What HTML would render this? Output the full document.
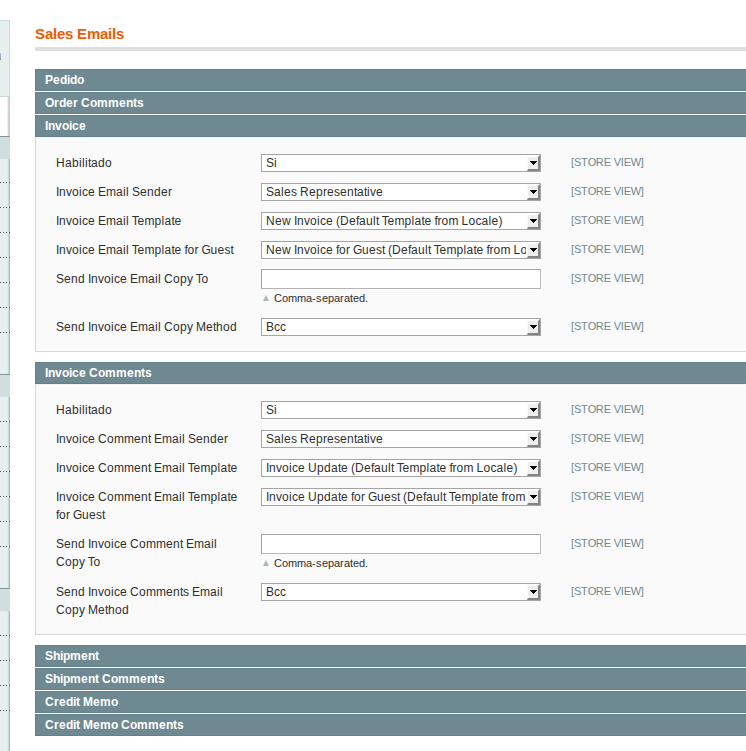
<!DOCTYPE html>
<html><head><meta charset="utf-8"><title>Sales Emails</title>
<style>
html,body{margin:0;padding:0;}
body{width:746px;height:751px;overflow:hidden;position:relative;background:#fff;font-family:"Liberation Sans",sans-serif;color:#2f2f2f;}
.a{position:absolute;}
i{display:inline-block;font-style:normal;}
.w0{width:0px}.w1{width:1px}.w2{width:2px}.w3{width:3px}.w4{width:4px}.w5{width:5px}.w6{width:6px}.w7{width:7px}.w8{width:8px}.w9{width:9px}.w10{width:10px}.w11{width:11px}.w12{width:12px}.w13{width:13px}.w14{width:14px}.w15{width:15px}.w16{width:16px}
.t12{position:absolute;font-size:12px;line-height:14px;white-space:nowrap;color:#2f2f2f;}
.t11{position:absolute;font-size:11px;line-height:13px;white-space:nowrap;}
.scope{color:#6f8992;}
.nav-light{position:absolute;left:0;width:10px;background:linear-gradient(to right,#e6eeee 0,#e6eeee 7px,#e2ebeb 7px,#e2ebeb 8px,#cbdada 8px,#cbdada 9px,#a6bbbb 9px,#a6bbbb 10px);}
.nav-white{position:absolute;left:0;width:10px;background:linear-gradient(to right,#fff 0,#fff 7px,#eeeeee 7px,#eeeeee 8px,#d8d8d8 8px,#d8d8d8 9px,#c6c6c6 9px,#c6c6c6 10px);}
.nav-dark{position:absolute;left:0;width:10px;height:1px;background:#7f969b;}
.nav-head{position:absolute;left:0;width:10px;height:22px;background:#d1dede;}
.dots{position:absolute;left:0;width:10px;height:1px;background:repeating-linear-gradient(to right,#4d4d4d 0,#4d4d4d 1px,#e6eeee 1px,#e6eeee 2px,#fff 2px,#fff 3px);}
.head{position:absolute;left:35px;width:730px;height:20px;background:#6f8992;border:1px solid #64808a;border-right:0;}
.head span{position:absolute;left:9px;font-size:12px;line-height:14px;font-weight:bold;color:#fff;white-space:nowrap;}
.fs{position:absolute;left:35px;width:720px;background:#fafafa;border:1px solid #d6d6d6;border-top-color:#f2f2f2;border-right:0;}
.sel{position:absolute;left:261px;width:278px;height:16px;border:1px solid #a5a5a5;background:#fff;overflow:hidden;}
.sel .v{position:absolute;left:4px;width:260px;overflow:hidden;font-size:12px;line-height:14px;white-space:nowrap;color:#2f2f2f;}
.sel .btn{position:absolute;left:265px;top:0;width:10px;height:12px;background:#efeeed;border-top:2px solid #fff;border-left:1px solid #fbfbfb;border-right:2px solid #848484;border-bottom:2px solid #848484;}
.sel .tri{position:absolute;left:2px;top:4px;width:7px;height:4px;background:linear-gradient(#000,#000) 0 0/7px 1px no-repeat,linear-gradient(#000,#000) 1px 1px/5px 1px no-repeat,linear-gradient(#000,#000) 2px 2px/3px 1px no-repeat,linear-gradient(#000,#000) 3px 3px/1px 1px no-repeat;}
.inp{position:absolute;left:261px;width:278px;height:18px;border:1px solid;border-color:#a6a6a6 #bfbfbf #b5b5b5 #a3a3a3;background:#fff;}
.ntri{position:absolute;left:263px;width:0;height:0;border-left:3.5px solid transparent;border-right:3.5px solid transparent;border-bottom:6px solid #a9bbc1;}
</style></head><body>

<div class="a" style="left:0;top:20px;width:9px;height:75px;background:#e6eeee;border:1px solid #cbdada;border-left:0;"></div>
<div class="a" style="left:0;top:53px;width:1px;height:7px;background:linear-gradient(#b3c7e2,#7898c4);"></div>
<div class="nav-white" style="top:97px;height:39px;"></div>
<div class="nav-dark" style="top:136px"></div>
<div class="nav-head" style="top:137px"></div>
<div class="nav-light" style="top:159px;height:215px"></div>
<div class="dots" style="top:182px"></div>
<div class="dots" style="top:207px"></div>
<div class="dots" style="top:232px"></div>
<div class="dots" style="top:257px"></div>
<div class="dots" style="top:282px"></div>
<div class="dots" style="top:307px"></div>
<div class="dots" style="top:332px"></div>
<div class="nav-dark" style="top:374px"></div>
<div class="nav-head" style="top:375px"></div>
<div class="nav-light" style="top:397px;height:191px"></div>
<div class="dots" style="top:421px"></div>
<div class="dots" style="top:446px"></div>
<div class="dots" style="top:471px"></div>
<div class="dots" style="top:496px"></div>
<div class="dots" style="top:521px"></div>
<div class="dots" style="top:546px"></div>
<div class="nav-dark" style="top:588px"></div>
<div class="nav-head" style="top:589px"></div>
<div class="nav-light" style="top:611px;height:140px"></div>
<div class="dots" style="top:635px"></div>
<div class="dots" style="top:660px"></div>
<div class="dots" style="top:685px"></div>
<div class="dots" style="top:710px"></div>
<div class="a" style="left:35px;top:26px;font-size:15px;line-height:16px;font-weight:bold;color:#eb5e00;white-space:nowrap;"><i class="w10">S</i><i class="w8">a</i><i class="w4">l</i><i class="w8">e</i><i class="w8">s</i><i class="w4">&nbsp;</i><i class="w10">E</i><i class="w13">m</i><i class="w8">a</i><i class="w4">i</i><i class="w4">l</i><i class="w8">s</i></div>
<div class="a" style="left:35px;top:47px;width:711px;height:4px;background:#dfdfdf;"></div>
<div class="head" style="top:69px"><span style="top:3px"><i class="w8">P</i><i class="w7">e</i><i class="w7">d</i><i class="w3">i</i><i class="w7">d</i><i class="w7">o</i></span></div>
<div class="head" style="top:92px"><span style="top:3px"><i class="w9">O</i><i class="w5">r</i><i class="w7">d</i><i class="w7">e</i><i class="w5">r</i><i class="w3">&nbsp;</i><i class="w9">C</i><i class="w7">o</i><i class="w11">m</i><i class="w11">m</i><i class="w7">e</i><i class="w7">n</i><i class="w4">t</i><i class="w7">s</i></span></div>
<div class="head" style="top:115px"><span style="top:3px"><i class="w3">I</i><i class="w7">n</i><i class="w7">v</i><i class="w7">o</i><i class="w3">i</i><i class="w7">c</i><i class="w7">e</i></span></div>
<div class="fs" style="top:137px;height:213px"></div>
<div class="t12" style="left:56px;top:156px"><i class="w9">H</i><i class="w7">a</i><i class="w7">b</i><i class="w3">i</i><i class="w3">l</i><i class="w3">i</i><i class="w3">t</i><i class="w7">a</i><i class="w7">d</i><i class="w7">o</i></div>
<div class="t11 scope" style="left:571px;top:156px"><i class="w3">[</i><i class="w7">S</i><i style="width:6.80px">T</i><i class="w8">O</i><i class="w8">R</i><i class="w7">E</i><i class="w3">&nbsp;</i><i class="w7">V</i><i class="w3">I</i><i class="w7">E</i><i class="w10">W</i><i class="w3">]</i></div>
<div class="sel" style="top:154px"><div class="v" style="top:1px"><i class="w8">S</i><i class="w3">i</i></div><div class="btn"><div class="tri"></div></div></div>
<div class="t12" style="left:56px;top:185px"><i class="w3">I</i><i class="w7">n</i><i class="w6">v</i><i class="w7">o</i><i class="w3">i</i><i class="w6">c</i><i class="w7">e</i><i class="w3">&nbsp;</i><i class="w8">E</i><i class="w10">m</i><i class="w7">a</i><i class="w3">i</i><i class="w3">l</i><i class="w3">&nbsp;</i><i class="w8">S</i><i class="w7">e</i><i class="w7">n</i><i class="w7">d</i><i class="w7">e</i><i class="w4">r</i></div>
<div class="t11 scope" style="left:571px;top:185px"><i class="w3">[</i><i class="w7">S</i><i style="width:6.80px">T</i><i class="w8">O</i><i class="w8">R</i><i class="w7">E</i><i class="w3">&nbsp;</i><i class="w7">V</i><i class="w3">I</i><i class="w7">E</i><i class="w10">W</i><i class="w3">]</i></div>
<div class="sel" style="top:183px"><div class="v" style="top:1px"><i class="w8">S</i><i class="w7">a</i><i class="w3">l</i><i class="w7">e</i><i class="w6">s</i><i class="w3">&nbsp;</i><i class="w9">R</i><i class="w7">e</i><i class="w7">p</i><i class="w4">r</i><i class="w7">e</i><i class="w6">s</i><i class="w7">e</i><i class="w7">n</i><i class="w3">t</i><i class="w7">a</i><i class="w3">t</i><i class="w3">i</i><i class="w6">v</i><i class="w7">e</i></div><div class="btn"><div class="tri"></div></div></div>
<div class="t12" style="left:56px;top:214px"><i class="w3">I</i><i class="w7">n</i><i class="w6">v</i><i class="w7">o</i><i class="w3">i</i><i class="w6">c</i><i class="w7">e</i><i class="w3">&nbsp;</i><i class="w8">E</i><i class="w10">m</i><i class="w7">a</i><i class="w3">i</i><i class="w3">l</i><i style="width:2.78px">&nbsp;</i><i style="width:5.67px">T</i><i class="w7">e</i><i class="w10">m</i><i class="w7">p</i><i class="w3">l</i><i class="w7">a</i><i class="w3">t</i><i class="w7">e</i></div>
<div class="t11 scope" style="left:571px;top:214px"><i class="w3">[</i><i class="w7">S</i><i style="width:6.80px">T</i><i class="w8">O</i><i class="w8">R</i><i class="w7">E</i><i class="w3">&nbsp;</i><i class="w7">V</i><i class="w3">I</i><i class="w7">E</i><i class="w10">W</i><i class="w3">]</i></div>
<div class="sel" style="top:212px"><div class="v" style="top:1px"><i class="w9">N</i><i class="w7">e</i><i class="w9">w</i><i class="w3">&nbsp;</i><i class="w3">I</i><i class="w7">n</i><i class="w6">v</i><i class="w7">o</i><i class="w3">i</i><i class="w6">c</i><i class="w7">e</i><i class="w3">&nbsp;</i><i class="w4">(</i><i class="w9">D</i><i class="w7">e</i><i class="w3">f</i><i class="w7">a</i><i class="w7">u</i><i class="w3">l</i><i class="w3">t</i><i style="width:2.78px">&nbsp;</i><i style="width:5.67px">T</i><i class="w7">e</i><i class="w10">m</i><i class="w7">p</i><i class="w3">l</i><i class="w7">a</i><i class="w3">t</i><i class="w7">e</i><i class="w3">&nbsp;</i><i class="w3">f</i><i class="w4">r</i><i class="w7">o</i><i class="w10">m</i><i class="w3">&nbsp;</i><i class="w7">L</i><i class="w7">o</i><i class="w6">c</i><i class="w7">a</i><i class="w3">l</i><i class="w7">e</i><i class="w4">)</i></div><div class="btn"><div class="tri"></div></div></div>
<div class="t12" style="left:56px;top:243px"><i class="w3">I</i><i class="w7">n</i><i class="w6">v</i><i class="w7">o</i><i class="w3">i</i><i class="w6">c</i><i class="w7">e</i><i class="w3">&nbsp;</i><i class="w8">E</i><i class="w10">m</i><i class="w7">a</i><i class="w3">i</i><i class="w3">l</i><i style="width:2.78px">&nbsp;</i><i style="width:5.67px">T</i><i class="w7">e</i><i class="w10">m</i><i class="w7">p</i><i class="w3">l</i><i class="w7">a</i><i class="w3">t</i><i class="w7">e</i><i class="w3">&nbsp;</i><i class="w3">f</i><i class="w7">o</i><i class="w4">r</i><i class="w3">&nbsp;</i><i class="w9">G</i><i class="w7">u</i><i class="w7">e</i><i class="w6">s</i><i class="w3">t</i></div>
<div class="t11 scope" style="left:571px;top:243px"><i class="w3">[</i><i class="w7">S</i><i style="width:6.80px">T</i><i class="w8">O</i><i class="w8">R</i><i class="w7">E</i><i class="w3">&nbsp;</i><i class="w7">V</i><i class="w3">I</i><i class="w7">E</i><i class="w10">W</i><i class="w3">]</i></div>
<div class="sel" style="top:241px"><div class="v" style="top:1px"><i class="w9">N</i><i class="w7">e</i><i class="w9">w</i><i class="w3">&nbsp;</i><i class="w3">I</i><i class="w7">n</i><i class="w6">v</i><i class="w7">o</i><i class="w3">i</i><i class="w6">c</i><i class="w7">e</i><i class="w3">&nbsp;</i><i class="w3">f</i><i class="w7">o</i><i class="w4">r</i><i class="w3">&nbsp;</i><i class="w9">G</i><i class="w7">u</i><i class="w7">e</i><i class="w6">s</i><i class="w3">t</i><i class="w3">&nbsp;</i><i class="w4">(</i><i class="w9">D</i><i class="w7">e</i><i class="w3">f</i><i class="w7">a</i><i class="w7">u</i><i class="w3">l</i><i class="w3">t</i><i style="width:2.78px">&nbsp;</i><i style="width:5.67px">T</i><i class="w7">e</i><i class="w10">m</i><i class="w7">p</i><i class="w3">l</i><i class="w7">a</i><i class="w3">t</i><i class="w7">e</i><i class="w3">&nbsp;</i><i class="w3">f</i><i class="w4">r</i><i class="w7">o</i><i class="w10">m</i><i class="w3">&nbsp;</i><i class="w7">L</i><i class="w7">o</i><i class="w6">c</i><i class="w7">a</i><i class="w3">l</i><i class="w7">e</i><i class="w4">)</i></div><div class="btn"><div class="tri"></div></div></div>
<div class="t12" style="left:56px;top:272px"><i class="w8">S</i><i class="w7">e</i><i class="w7">n</i><i class="w7">d</i><i class="w3">&nbsp;</i><i class="w3">I</i><i class="w7">n</i><i class="w6">v</i><i class="w7">o</i><i class="w3">i</i><i class="w6">c</i><i class="w7">e</i><i class="w3">&nbsp;</i><i class="w8">E</i><i class="w10">m</i><i class="w7">a</i><i class="w3">i</i><i class="w3">l</i><i class="w3">&nbsp;</i><i class="w9">C</i><i class="w7">o</i><i class="w7">p</i><i class="w6">y</i><i style="width:2.78px">&nbsp;</i><i style="width:5.67px">T</i><i class="w7">o</i></div>
<div class="t11 scope" style="left:571px;top:272px"><i class="w3">[</i><i class="w7">S</i><i style="width:6.80px">T</i><i class="w8">O</i><i class="w8">R</i><i class="w7">E</i><i class="w3">&nbsp;</i><i class="w7">V</i><i class="w3">I</i><i class="w7">E</i><i class="w10">W</i><i class="w3">]</i></div>
<div class="inp" style="top:269px"></div>
<div class="ntri" style="top:295px"></div>
<div class="t11" style="left:274px;top:292px"><i class="w8">C</i><i class="w6">o</i><i class="w9">m</i><i class="w9">m</i><i class="w6">a</i><i class="w4">-</i><i class="w6">s</i><i class="w6">e</i><i class="w6">p</i><i class="w6">a</i><i class="w4">r</i><i class="w6">a</i><i class="w3">t</i><i class="w6">e</i><i class="w6">d</i><i class="w3">.</i></div>
<div class="t12" style="left:56px;top:320px"><i class="w8">S</i><i class="w7">e</i><i class="w7">n</i><i class="w7">d</i><i class="w3">&nbsp;</i><i class="w3">I</i><i class="w7">n</i><i class="w6">v</i><i class="w7">o</i><i class="w3">i</i><i class="w6">c</i><i class="w7">e</i><i class="w3">&nbsp;</i><i class="w8">E</i><i class="w10">m</i><i class="w7">a</i><i class="w3">i</i><i class="w3">l</i><i class="w3">&nbsp;</i><i class="w9">C</i><i class="w7">o</i><i class="w7">p</i><i class="w6">y</i><i class="w3">&nbsp;</i><i class="w10">M</i><i class="w7">e</i><i class="w3">t</i><i class="w7">h</i><i class="w7">o</i><i class="w7">d</i></div>
<div class="t11 scope" style="left:571px;top:320px"><i class="w3">[</i><i class="w7">S</i><i style="width:6.80px">T</i><i class="w8">O</i><i class="w8">R</i><i class="w7">E</i><i class="w3">&nbsp;</i><i class="w7">V</i><i class="w3">I</i><i class="w7">E</i><i class="w10">W</i><i class="w3">]</i></div>
<div class="sel" style="top:318px"><div class="v" style="top:1px"><i class="w8">B</i><i class="w6">c</i><i class="w6">c</i></div><div class="btn"><div class="tri"></div></div></div>
<div class="head" style="top:362px"><span style="top:3px"><i class="w3">I</i><i class="w7">n</i><i class="w7">v</i><i class="w7">o</i><i class="w3">i</i><i class="w7">c</i><i class="w7">e</i><i class="w3">&nbsp;</i><i class="w9">C</i><i class="w7">o</i><i class="w11">m</i><i class="w11">m</i><i class="w7">e</i><i class="w7">n</i><i class="w4">t</i><i class="w7">s</i></span></div>
<div class="fs" style="top:384px;height:249px"></div>
<div class="t12" style="left:56px;top:403px"><i class="w9">H</i><i class="w7">a</i><i class="w7">b</i><i class="w3">i</i><i class="w3">l</i><i class="w3">i</i><i class="w3">t</i><i class="w7">a</i><i class="w7">d</i><i class="w7">o</i></div>
<div class="t11 scope" style="left:571px;top:403px"><i class="w3">[</i><i class="w7">S</i><i style="width:6.80px">T</i><i class="w8">O</i><i class="w8">R</i><i class="w7">E</i><i class="w3">&nbsp;</i><i class="w7">V</i><i class="w3">I</i><i class="w7">E</i><i class="w10">W</i><i class="w3">]</i></div>
<div class="sel" style="top:401px"><div class="v" style="top:1px"><i class="w8">S</i><i class="w3">i</i></div><div class="btn"><div class="tri"></div></div></div>
<div class="t12" style="left:56px;top:432px"><i class="w3">I</i><i class="w7">n</i><i class="w6">v</i><i class="w7">o</i><i class="w3">i</i><i class="w6">c</i><i class="w7">e</i><i class="w3">&nbsp;</i><i class="w9">C</i><i class="w7">o</i><i class="w10">m</i><i class="w10">m</i><i class="w7">e</i><i class="w7">n</i><i class="w3">t</i><i class="w3">&nbsp;</i><i class="w8">E</i><i class="w10">m</i><i class="w7">a</i><i class="w3">i</i><i class="w3">l</i><i class="w3">&nbsp;</i><i class="w8">S</i><i class="w7">e</i><i class="w7">n</i><i class="w7">d</i><i class="w7">e</i><i class="w4">r</i></div>
<div class="t11 scope" style="left:571px;top:432px"><i class="w3">[</i><i class="w7">S</i><i style="width:6.80px">T</i><i class="w8">O</i><i class="w8">R</i><i class="w7">E</i><i class="w3">&nbsp;</i><i class="w7">V</i><i class="w3">I</i><i class="w7">E</i><i class="w10">W</i><i class="w3">]</i></div>
<div class="sel" style="top:430px"><div class="v" style="top:1px"><i class="w8">S</i><i class="w7">a</i><i class="w3">l</i><i class="w7">e</i><i class="w6">s</i><i class="w3">&nbsp;</i><i class="w9">R</i><i class="w7">e</i><i class="w7">p</i><i class="w4">r</i><i class="w7">e</i><i class="w6">s</i><i class="w7">e</i><i class="w7">n</i><i class="w3">t</i><i class="w7">a</i><i class="w3">t</i><i class="w3">i</i><i class="w6">v</i><i class="w7">e</i></div><div class="btn"><div class="tri"></div></div></div>
<div class="t12" style="left:56px;top:461px"><i class="w3">I</i><i class="w7">n</i><i class="w6">v</i><i class="w7">o</i><i class="w3">i</i><i class="w6">c</i><i class="w7">e</i><i class="w3">&nbsp;</i><i class="w9">C</i><i class="w7">o</i><i class="w10">m</i><i class="w10">m</i><i class="w7">e</i><i class="w7">n</i><i class="w3">t</i><i class="w3">&nbsp;</i><i class="w8">E</i><i class="w10">m</i><i class="w7">a</i><i class="w3">i</i><i class="w3">l</i><i style="width:2.78px">&nbsp;</i><i style="width:5.67px">T</i><i class="w7">e</i><i class="w10">m</i><i class="w7">p</i><i class="w3">l</i><i class="w7">a</i><i class="w3">t</i><i class="w7">e</i></div>
<div class="t11 scope" style="left:571px;top:461px"><i class="w3">[</i><i class="w7">S</i><i style="width:6.80px">T</i><i class="w8">O</i><i class="w8">R</i><i class="w7">E</i><i class="w3">&nbsp;</i><i class="w7">V</i><i class="w3">I</i><i class="w7">E</i><i class="w10">W</i><i class="w3">]</i></div>
<div class="sel" style="top:459px"><div class="v" style="top:1px"><i class="w3">I</i><i class="w7">n</i><i class="w6">v</i><i class="w7">o</i><i class="w3">i</i><i class="w6">c</i><i class="w7">e</i><i class="w3">&nbsp;</i><i class="w9">U</i><i class="w7">p</i><i class="w7">d</i><i class="w7">a</i><i class="w3">t</i><i class="w7">e</i><i class="w3">&nbsp;</i><i class="w4">(</i><i class="w9">D</i><i class="w7">e</i><i class="w3">f</i><i class="w7">a</i><i class="w7">u</i><i class="w3">l</i><i class="w3">t</i><i style="width:2.78px">&nbsp;</i><i style="width:5.67px">T</i><i class="w7">e</i><i class="w10">m</i><i class="w7">p</i><i class="w3">l</i><i class="w7">a</i><i class="w3">t</i><i class="w7">e</i><i class="w3">&nbsp;</i><i class="w3">f</i><i class="w4">r</i><i class="w7">o</i><i class="w10">m</i><i class="w3">&nbsp;</i><i class="w7">L</i><i class="w7">o</i><i class="w6">c</i><i class="w7">a</i><i class="w3">l</i><i class="w7">e</i><i class="w4">)</i></div><div class="btn"><div class="tri"></div></div></div>
<div class="t12" style="left:56px;top:490px"><i class="w3">I</i><i class="w7">n</i><i class="w6">v</i><i class="w7">o</i><i class="w3">i</i><i class="w6">c</i><i class="w7">e</i><i class="w3">&nbsp;</i><i class="w9">C</i><i class="w7">o</i><i class="w10">m</i><i class="w10">m</i><i class="w7">e</i><i class="w7">n</i><i class="w3">t</i><i class="w3">&nbsp;</i><i class="w8">E</i><i class="w10">m</i><i class="w7">a</i><i class="w3">i</i><i class="w3">l</i><i style="width:2.78px">&nbsp;</i><i style="width:5.67px">T</i><i class="w7">e</i><i class="w10">m</i><i class="w7">p</i><i class="w3">l</i><i class="w7">a</i><i class="w3">t</i><i class="w7">e</i></div>
<div class="t12" style="left:56px;top:508px"><i class="w3">f</i><i class="w7">o</i><i class="w4">r</i><i class="w3">&nbsp;</i><i class="w9">G</i><i class="w7">u</i><i class="w7">e</i><i class="w6">s</i><i class="w3">t</i></div>
<div class="t11 scope" style="left:571px;top:490px"><i class="w3">[</i><i class="w7">S</i><i style="width:6.80px">T</i><i class="w8">O</i><i class="w8">R</i><i class="w7">E</i><i class="w3">&nbsp;</i><i class="w7">V</i><i class="w3">I</i><i class="w7">E</i><i class="w10">W</i><i class="w3">]</i></div>
<div class="sel" style="top:488px"><div class="v" style="top:1px"><i class="w3">I</i><i class="w7">n</i><i class="w6">v</i><i class="w7">o</i><i class="w3">i</i><i class="w6">c</i><i class="w7">e</i><i class="w3">&nbsp;</i><i class="w9">U</i><i class="w7">p</i><i class="w7">d</i><i class="w7">a</i><i class="w3">t</i><i class="w7">e</i><i class="w3">&nbsp;</i><i class="w3">f</i><i class="w7">o</i><i class="w4">r</i><i class="w3">&nbsp;</i><i class="w9">G</i><i class="w7">u</i><i class="w7">e</i><i class="w6">s</i><i class="w3">t</i><i class="w3">&nbsp;</i><i class="w4">(</i><i class="w9">D</i><i class="w7">e</i><i class="w3">f</i><i class="w7">a</i><i class="w7">u</i><i class="w3">l</i><i class="w3">t</i><i style="width:2.78px">&nbsp;</i><i style="width:5.67px">T</i><i class="w7">e</i><i class="w10">m</i><i class="w7">p</i><i class="w3">l</i><i class="w7">a</i><i class="w3">t</i><i class="w7">e</i><i class="w3">&nbsp;</i><i class="w3">f</i><i class="w4">r</i><i class="w7">o</i><i class="w10">m</i><i class="w3">&nbsp;</i><i class="w7">L</i><i class="w7">o</i><i class="w6">c</i><i class="w7">a</i><i class="w3">l</i><i class="w7">e</i><i class="w4">)</i></div><div class="btn"><div class="tri"></div></div></div>
<div class="t12" style="left:56px;top:537px"><i class="w8">S</i><i class="w7">e</i><i class="w7">n</i><i class="w7">d</i><i class="w3">&nbsp;</i><i class="w3">I</i><i class="w7">n</i><i class="w6">v</i><i class="w7">o</i><i class="w3">i</i><i class="w6">c</i><i class="w7">e</i><i class="w3">&nbsp;</i><i class="w9">C</i><i class="w7">o</i><i class="w10">m</i><i class="w10">m</i><i class="w7">e</i><i class="w7">n</i><i class="w3">t</i><i class="w3">&nbsp;</i><i class="w8">E</i><i class="w10">m</i><i class="w7">a</i><i class="w3">i</i><i class="w3">l</i></div>
<div class="t12" style="left:56px;top:555px"><i class="w9">C</i><i class="w7">o</i><i class="w7">p</i><i class="w6">y</i><i style="width:2.78px">&nbsp;</i><i style="width:5.67px">T</i><i class="w7">o</i></div>
<div class="t11 scope" style="left:571px;top:537px"><i class="w3">[</i><i class="w7">S</i><i style="width:6.80px">T</i><i class="w8">O</i><i class="w8">R</i><i class="w7">E</i><i class="w3">&nbsp;</i><i class="w7">V</i><i class="w3">I</i><i class="w7">E</i><i class="w10">W</i><i class="w3">]</i></div>
<div class="inp" style="top:534px"></div>
<div class="ntri" style="top:560px"></div>
<div class="t11" style="left:274px;top:557px"><i class="w8">C</i><i class="w6">o</i><i class="w9">m</i><i class="w9">m</i><i class="w6">a</i><i class="w4">-</i><i class="w6">s</i><i class="w6">e</i><i class="w6">p</i><i class="w6">a</i><i class="w4">r</i><i class="w6">a</i><i class="w3">t</i><i class="w6">e</i><i class="w6">d</i><i class="w3">.</i></div>
<div class="t12" style="left:56px;top:585px"><i class="w8">S</i><i class="w7">e</i><i class="w7">n</i><i class="w7">d</i><i class="w3">&nbsp;</i><i class="w3">I</i><i class="w7">n</i><i class="w6">v</i><i class="w7">o</i><i class="w3">i</i><i class="w6">c</i><i class="w7">e</i><i class="w3">&nbsp;</i><i class="w9">C</i><i class="w7">o</i><i class="w10">m</i><i class="w10">m</i><i class="w7">e</i><i class="w7">n</i><i class="w3">t</i><i class="w6">s</i><i class="w3">&nbsp;</i><i class="w8">E</i><i class="w10">m</i><i class="w7">a</i><i class="w3">i</i><i class="w3">l</i></div>
<div class="t12" style="left:56px;top:603px"><i class="w9">C</i><i class="w7">o</i><i class="w7">p</i><i class="w6">y</i><i class="w3">&nbsp;</i><i class="w10">M</i><i class="w7">e</i><i class="w3">t</i><i class="w7">h</i><i class="w7">o</i><i class="w7">d</i></div>
<div class="t11 scope" style="left:571px;top:585px"><i class="w3">[</i><i class="w7">S</i><i style="width:6.80px">T</i><i class="w8">O</i><i class="w8">R</i><i class="w7">E</i><i class="w3">&nbsp;</i><i class="w7">V</i><i class="w3">I</i><i class="w7">E</i><i class="w10">W</i><i class="w3">]</i></div>
<div class="sel" style="top:583px"><div class="v" style="top:1px"><i class="w8">B</i><i class="w6">c</i><i class="w6">c</i></div><div class="btn"><div class="tri"></div></div></div>
<div class="head" style="top:645px"><span style="top:3px"><i class="w8">S</i><i class="w7">h</i><i class="w3">i</i><i class="w7">p</i><i class="w11">m</i><i class="w7">e</i><i class="w7">n</i><i class="w4">t</i></span></div>
<div class="head" style="top:668px"><span style="top:3px"><i class="w8">S</i><i class="w7">h</i><i class="w3">i</i><i class="w7">p</i><i class="w11">m</i><i class="w7">e</i><i class="w7">n</i><i class="w4">t</i><i class="w3">&nbsp;</i><i class="w9">C</i><i class="w7">o</i><i class="w11">m</i><i class="w11">m</i><i class="w7">e</i><i class="w7">n</i><i class="w4">t</i><i class="w7">s</i></span></div>
<div class="head" style="top:691px"><span style="top:3px"><i class="w9">C</i><i class="w5">r</i><i class="w7">e</i><i class="w7">d</i><i class="w3">i</i><i class="w4">t</i><i class="w3">&nbsp;</i><i class="w10">M</i><i class="w7">e</i><i class="w11">m</i><i class="w7">o</i></span></div>
<div class="head" style="top:714px"><span style="top:3px"><i class="w9">C</i><i class="w5">r</i><i class="w7">e</i><i class="w7">d</i><i class="w3">i</i><i class="w4">t</i><i class="w3">&nbsp;</i><i class="w10">M</i><i class="w7">e</i><i class="w11">m</i><i class="w7">o</i><i class="w3">&nbsp;</i><i class="w9">C</i><i class="w7">o</i><i class="w11">m</i><i class="w11">m</i><i class="w7">e</i><i class="w7">n</i><i class="w4">t</i><i class="w7">s</i></span></div>
</body></html>
